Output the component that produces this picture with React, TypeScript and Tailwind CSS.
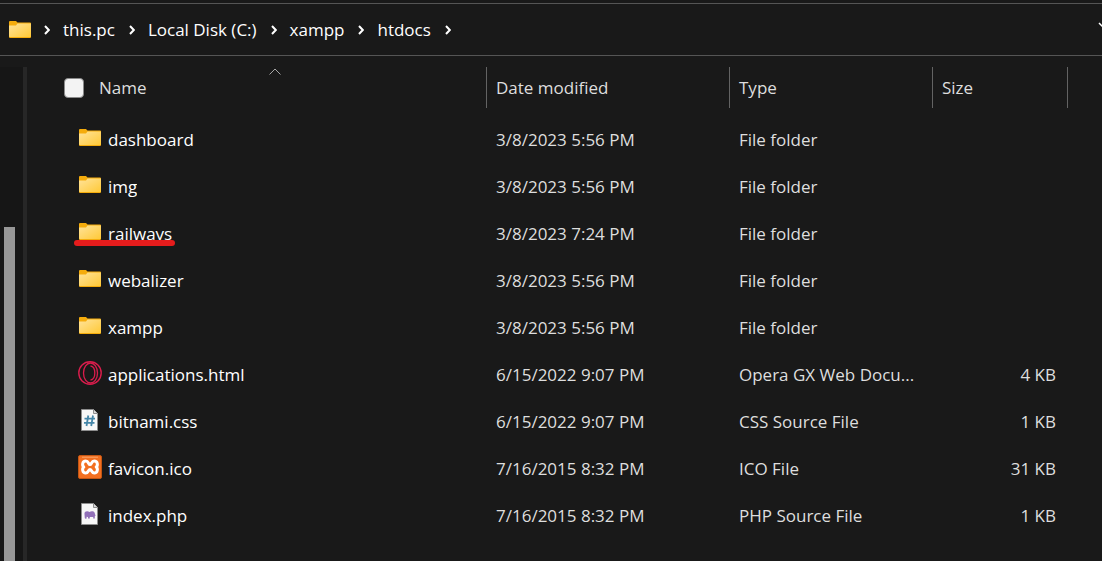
import { useState } from 'react';

type IconKind = 'folder' | 'opera' | 'css' | 'xampp' | 'php';
type SortKey = 'name' | 'date' | 'type' | 'size';

interface Entry {
  name: string;
  date: string;
  type: string;
  size?: number;
  icon: IconKind;
  marked?: boolean;
}

const PATH = ['this.pc', 'Local Disk (C:)', 'xampp', 'htdocs'];

const ENTRIES: Entry[] = [
  { name: 'dashboard', date: '3/8/2023 5:56 PM', type: 'File folder', icon: 'folder' },
  { name: 'img', date: '3/8/2023 5:56 PM', type: 'File folder', icon: 'folder' },
  { name: 'railways', date: '3/8/2023 7:24 PM', type: 'File folder', icon: 'folder', marked: true },
  { name: 'webalizer', date: '3/8/2023 5:56 PM', type: 'File folder', icon: 'folder' },
  { name: 'xampp', date: '3/8/2023 5:56 PM', type: 'File folder', icon: 'folder' },
  { name: 'applications.html', date: '6/15/2022 9:07 PM', type: 'Opera GX Web Docu...', size: 4, icon: 'opera' },
  { name: 'bitnami.css', date: '6/15/2022 9:07 PM', type: 'CSS Source File', size: 1, icon: 'css' },
  { name: 'favicon.ico', date: '7/16/2015 8:32 PM', type: 'ICO File', size: 31, icon: 'xampp' },
  { name: 'index.php', date: '7/16/2015 8:32 PM', type: 'PHP Source File', size: 1, icon: 'php' },
];

const COLUMNS: { key: SortKey; label: string }[] = [
  { key: 'date', label: 'Date modified' },
  { key: 'type', label: 'Type' },
  { key: 'size', label: 'Size' },
];

function FolderIcon() {
  return (
    <svg viewBox="0 0 24 24" className="h-6 w-6 shrink-0" aria-hidden="true">
      <defs>
        <linearGradient id="folder" x1="0" y1="0" x2="1" y2="1">
          <stop offset="0" stopColor="#ffe39a" />
          <stop offset="1" stopColor="#ffc937" />
        </linearGradient>
      </defs>
      <path d="M1 4a1 1 0 0 1 1-1h6l1.500 1.500H22a1 1 0 0 1 1 1V19a1 1 0 0 1-1 1H2a1 1 0 0 1-1-1z" fill="#f5ac0c" />
      <path d="M1 7.500h7L9.500 5.500H23V18.200a.8.8 0 0 1-.8.800H1.800a.8.8 0 0 1-.8-.8z" fill="url(#folder)" />
    </svg>
  );
}

function PageShape() {
  return (
    <>
      <path d="M3.500 1.500H15.500L19.500 5.500V22.500H3.500z" fill="#f7f7f7" stroke="#8d8d8d" />
      <path d="M15.500 1.500V5.500H19.500" fill="#d8d8d8" stroke="#8d8d8d" />
    </>
  );
}

function FileIcon({ kind }: { kind: IconKind }) {
  if (kind === 'folder') return <FolderIcon />;
  return (
    <svg viewBox="0 0 24 24" className="h-6 w-6 shrink-0" aria-hidden="true">
      {kind === 'opera' && (
        <g fill="none" stroke="#d91d4c">
          <circle cx="12" cy="12" r="11.200" strokeWidth="1.400" />
          <ellipse cx="12.500" cy="12" rx="7" ry="10" strokeWidth="1.300" />
          <path d="M12.500 5C15.500 5.300 16.800 8.500 16.800 12s-1.300 6.700-4.300 7" strokeWidth="1.300" />
        </g>
      )}
      {kind === 'css' && (
        <>
          <PageShape />
          <path d="M10.300 7.500L8.500 18M15 7.500L13.200 18M6.500 10.700H17M6 14.800H16.500" fill="none" stroke="#4586a8" strokeWidth="1.800" />
        </>
      )}
      {kind === 'xampp' && (
        <>
          <rect x=".5" y=".5" width="23" height="23" rx="1.500" fill="#f37021" stroke="#c45512" />
          <path d="M4 2.200H20" stroke="#f9a66c" />
          <path
            d="M5.800 12C4 10.800 4.100 6 7.800 6c2.800 0 2.600 3.600 4.200 3.600S13.400 6 16.200 6c3.700 0 3.800 4.800 2 6 1.800 1.200 1.700 6-2 6-2.800 0-2.600-3.600-4.200-3.600S10.600 18 7.800 18c-3.700 0-3.800-4.800-2-6z"
            fill="none"
            stroke="#fff"
            strokeWidth="3"
            strokeLinejoin="round"
          />
        </>
      )}
      {kind === 'php' && (
        <>
          <PageShape />
          <path
            d="M6.500 12.500c-.3-2 .8-3.200 2.700-3.200 1 0 1.600.2 2.200.7 1-.6 2-.8 3-.7 1.800.2 2.600 1.400 2.600 3l.6 1.200-.8.800v2.200h-1.600v-1.600h-3.400v1.600H10V15l-1.400-.3v1.500c-.6.800-1.700.600-1.800-.3z"
            fill="#9170b8"
          />
        </>
      )}
    </svg>
  );
}

function Chevron() {
  return (
    <svg viewBox="0 0 6 10" className="h-[10px] w-[6px] shrink-0" fill="none" stroke="#fff" strokeWidth="2" aria-hidden="true">
      <path d="M1 1L4.800 5L1 9" />
    </svg>
  );
}

export default function App() {
  const [sortKey, setSortKey] = useState<SortKey>('name');

  return (
    <div className="flex min-h-screen flex-col overflow-hidden bg-[#191919] pt-[3px] font-['Open_Sans','Noto_Sans',sans-serif] text-[17px] leading-6 text-[#dedede]">
      {/* Address bar */}
      <nav aria-label="Path" className="flex h-[53px] items-center border-y border-[#555] pl-2 text-white">
        <FolderIcon />
        <ol className="ml-3 flex items-center gap-[13px]">
          <li className="flex"><Chevron /></li>
          {PATH.map((part) => (
            <li key={part} className="flex items-center gap-[14px]">
              <a href="#" className="whitespace-nowrap">{part}</a>
              <Chevron />
            </li>
          ))}
        </ol>
        <button type="button" aria-label="Previous locations" className="ml-auto w-1 overflow-hidden pb-2">
          <svg viewBox="0 0 12 8" className="h-2 w-3 max-w-none" fill="none" stroke="#fff" strokeWidth="1.500" aria-hidden="true">
            <path d="M1 1L6 6L11 1" />
          </svg>
        </button>
      </nav>

      <div className="flex flex-1 pt-[11px]">
        {/* Navigation pane scrollbar */}
        <aside className="flex w-[27px] shrink-0 border-r-4 border-[#272727] bg-[#161616] pt-40 pl-1">
          <div className="w-[11px] bg-[#979797]" />
        </aside>

        <main className="min-w-0 flex-1">
          <table className="w-full table-fixed text-left">
            <colgroup>
              <col />
              <col className="w-[243px]" />
              <col className="w-[203px]" />
              <col className="w-[135px]" />
              <col className="w-[35px]" />
            </colgroup>
            <thead>
              <tr className="h-[49px] align-top">
                <th className="p-0 pl-[37px] font-normal">
                  <div className="relative flex h-[41px] items-center gap-[15px]">
                    <input
                      type="checkbox"
                      aria-label="Select all"
                      className="h-5 w-5 appearance-none rounded border border-[#8a8a8a] bg-[#f3f3f3]"
                    />
                    <button type="button" className="pt-px" onClick={() => setSortKey('name')}>Name</button>
                    {sortKey === 'name' && (
                      <svg viewBox="0 0 12 7" className="absolute top-px left-1/2 h-[7px] w-3 -translate-x-1/2" fill="none" stroke="#a5a5a5" aria-hidden="true">
                        <path d="M.5 6.500L6 1L11.500 6.500" />
                      </svg>
                    )}
                  </div>
                </th>
                {COLUMNS.map((col) => (
                  <th key={col.key} className="p-0 font-normal">
                    <div className="flex h-[41px] items-center border-l border-[#636363] pl-[9px]">
                      <button type="button" className="pt-px" onClick={() => setSortKey(col.key)}>{col.label}</button>
                    </div>
                  </th>
                ))}
                <td className="p-0">
                  <div className="h-[41px] border-l border-[#636363]" />
                </td>
              </tr>
            </thead>
            <tbody>
              {ENTRIES.map((entry) => (
                <tr key={entry.name} className="h-[47px]">
                  <td className="p-0 pl-[51px]">
                    <div className="relative flex items-center gap-[6px] text-white">
                      <div className="pb-[3px]">
                        <FileIcon kind={entry.icon} />
                      </div>
                      <span className="truncate">{entry.name}</span>
                      {entry.marked && <span className="absolute top-5 -left-1 h-[6px] w-[101px] rounded-full bg-[#e51c1c]" />}
                    </div>
                  </td>
                  <td className="p-0 pl-[10px] whitespace-nowrap">{entry.date}</td>
                  <td className="p-0 pl-[10px] whitespace-nowrap">{entry.type}</td>
                  <td className="p-0 pr-[11px] text-right whitespace-nowrap">{entry.size && `${entry.size} KB`}</td>
                  <td className="p-0" />
                </tr>
              ))}
            </tbody>
          </table>
        </main>
      </div>
    </div>
  );
}
